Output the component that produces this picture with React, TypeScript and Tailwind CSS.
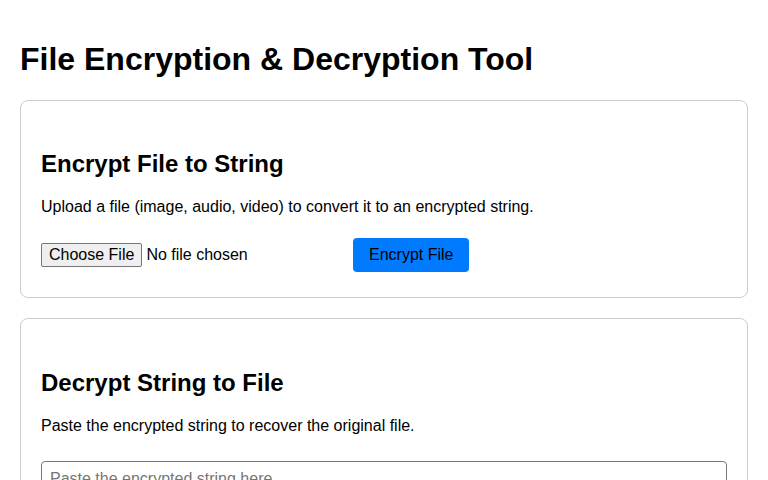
export default function App() {
  return (
    <div className="min-h-screen bg-white p-5 font-['Liberation_Sans',Arial,sans-serif] text-[16px] leading-[normal] text-black">
      <h1 className="my-[21.44px] text-[32px] font-bold">File Encryption &amp; Decryption Tool</h1>

      <section className="mb-5 rounded-lg border border-[#cccccc] p-5">
        <h2 className="mt-[29px] mb-[20px] text-[24px] font-bold">Encrypt File to String</h2>
        <p className="mb-[17px]">Upload a file (image, audio, video) to convert it to an encrypted string.</p>
        <div className="flex items-center">
          <input
            type="file"
            className="w-[307px] file:mr-1 file:rounded-[2px] file:border file:border-solid file:border-[#767676] file:bg-[#efefef] file:px-[7px] file:py-[2px]"
          />
          <button className="my-[5px] ml-[5px] rounded-[4px] bg-[#007bff] px-4 py-2 text-black">
            Encrypt File
          </button>
        </div>
      </section>

      <section className="mb-5 rounded-lg border border-[#cccccc] p-5">
        <h2 className="mt-[30px] mb-[20px] text-[24px] font-bold">Decrypt String to File</h2>
        <p className="mb-4">Paste the encrypted string to recover the original file.</p>
        <textarea
          rows={8}
          placeholder="Paste the encrypted string here..."
          className="mt-[26px] block w-full rounded-[4px] border border-[#767676] p-2 placeholder:text-[#757575]"
        />
        <button className="my-[5px] rounded-[4px] bg-[#007bff] px-4 py-2 text-black">
          Decrypt String
        </button>
      </section>
    </div>
  );
}
